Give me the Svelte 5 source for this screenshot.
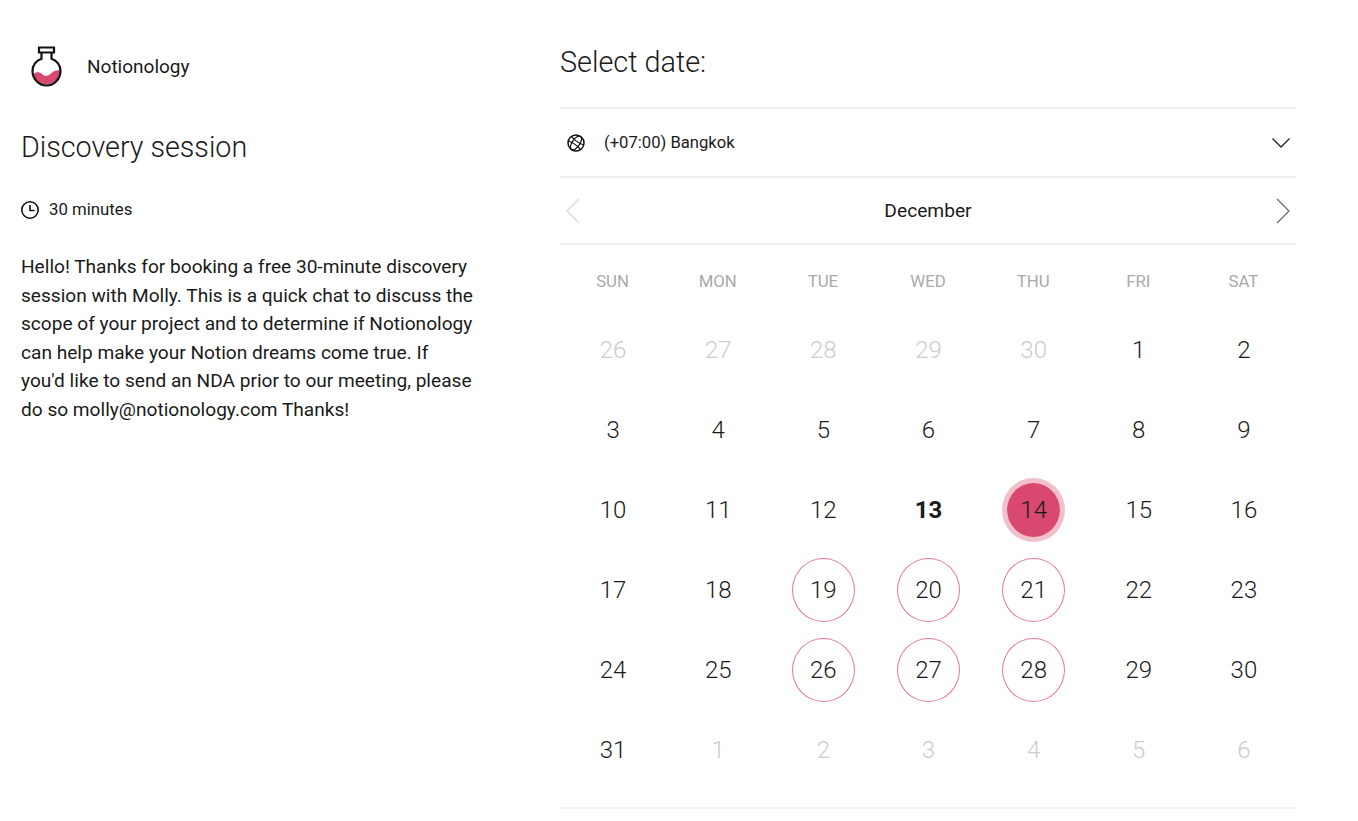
<script>
	const days = ['SUN', 'MON', 'TUE', 'WED', 'THU', 'FRI', 'SAT'];

	// muted: other month, ring: available slot
	const cells = [
		...[26, 27, 28, 29, 30].map((n) => ({ n, kind: 'muted' })),
		...Array.from({ length: 31 }, (_, i) => {
			const n = i + 1;
			let kind = '';
			if (n === 13) kind = 'today';
			if (n === 14) kind = 'selected';
			if ([19, 20, 21, 26, 27, 28].includes(n)) kind = 'ring';
			return { n, kind };
		}),
		...[1, 2, 3, 4, 5, 6].map((n) => ({ n, kind: 'muted' }))
	];
</script>

<div class="page">
	<section class="info">
		<div class="brand">
			<svg class="flask" width="36" height="42" viewBox="0 0 36 42" fill="none">
				<path d="M4.500 29C7 26.500 10.500 26.500 13 29C15.500 31.500 19 31.500 22 28.500C25 25.500 28 25 31 25.500C31 33 25 39.500 17.500 39.500C10 39.500 5 35 4.500 29z" fill="#d9486e" />
				<path d="M12.500 7.500v6.300C7 15.500 3.500 20.500 3.500 26c0 8 6.500 14.500 14 14.500S31.500 34 31.500 26c0-5.500-3.500-10.500-9-12.200V7.500" stroke="#111" stroke-width="2.200" />
				<path d="M10 2.500h15v5h-15z" stroke="#111" stroke-width="2.200" />
			</svg>
			<span>Notionology</span>
		</div>
		<h1>Discovery session</h1>
		<div class="duration">
			<svg width="20" height="20" viewBox="0 0 20 20" fill="none" stroke="#111" stroke-width="1.600">
				<circle cx="10" cy="10" r="8.200" />
				<path d="M10 5.500V10.500H14" stroke-linecap="round" />
			</svg>
			<span>30 minutes</span>
		</div>
		<p>Hello! Thanks for booking a free 30-minute discovery session with Molly. This is a quick chat to discuss the scope of your project and to determine if Notionology can help make your Notion dreams come true. If you'd like to send an NDA prior to our meeting, please do so molly@notionology.com Thanks!</p>
	</section>

	<section class="picker">
		<h2>Select date:</h2>
		<div class="timezone">
			<svg class="globe" width="20" height="20" viewBox="0 0 20 20" fill="none" stroke="#111" stroke-width="1.500">
				<circle cx="10" cy="10" r="8" />
				<g transform="rotate(35 10 10)" stroke-width="1.200">
					<ellipse cx="10" cy="10" rx="3.800" ry="8" />
					<path d="M2.500 7.200c4 1.500 11 1.500 15 0M2.500 12.800c4-1.500 11-1.500 15 0" />
				</g>
			</svg>
			<span>(+07:00) Bangkok</span>
			<svg class="chevron" width="20" height="12" viewBox="0 0 20 12" fill="none" stroke="#222" stroke-width="1.300">
				<path d="M1.500 1.500L10 10L18.500 1.500" />
			</svg>
		</div>
		<div class="month">
			<svg width="16" height="26" viewBox="0 0 16 26" fill="none" stroke="#d8d8d8" stroke-width="1.200">
				<path d="M14 1L2 13L14 25" />
			</svg>
			<span>December</span>
			<svg width="16" height="26" viewBox="0 0 16 26" fill="none" stroke="#666" stroke-width="1.200">
				<path d="M2 1L14 13L2 25" />
			</svg>
		</div>
		<div class="weekdays">
			{#each days as d}
				<div>{d}</div>
			{/each}
		</div>
		<div class="grid">
			{#each cells as c}
				<div class="cell">
					<span class="day {c.kind}">{c.n}</span>
				</div>
			{/each}
		</div>
	</section>
</div>

<style>
	:global(body) {
		background: #fff;
		color: #1a1a1a;
		font-family: Roboto, sans-serif;
	}

	.page {
		display: flex;
		height: 821px;
		overflow: hidden;
		box-sizing: border-box;
		padding-left: 21px;
	}

	.info {
		width: 460px;
		margin-right: 79px;
	}

	.brand {
		display: flex;
		align-items: center;
		gap: 22px;
		padding: 45px 0 0 8px;
		font-size: 19px;
		height: 42px;
	}

	h1 {
		margin: 40px 0 0;
		font-size: 28.700px;
		font-weight: 300;
		line-height: 40px;
	}

	.duration {
		display: flex;
		align-items: center;
		gap: 9px;
		margin-top: 33px;
		font-size: 16.800px;
		line-height: 20px;
	}

	.duration svg {
		margin-left: -1px;
	}

	.duration span {
		margin-top: -2px;
	}

	.info p {
		width: 454px;
		margin: 33px 0 0;
		font-size: 19.100px;
		line-height: 28.600px;
	}

	.picker {
		width: 736px;
	}

	h2 {
		margin: 0;
		height: 107px;
		box-sizing: border-box;
		padding-top: 43px;
		font-size: 28.800px;
		font-weight: 300;
		line-height: 38px;
	}

	.timezone {
		display: flex;
		align-items: center;
		height: 71px;
		box-sizing: border-box;
		border-top: 2px solid #f0f0f0;
		border-bottom: 2px solid #f0f0f0;
		padding: 0 5px 0 6px;
		font-size: 16.640px;
	}

	.globe {
		margin-right: 18px;
	}

	.chevron {
		margin-left: auto;
	}

	.month {
		display: flex;
		align-items: center;
		justify-content: space-between;
		height: 67px;
		box-sizing: border-box;
		border-bottom: 2px solid #f0f0f0;
		padding: 0 5px;
		font-size: 19.200px;
	}

	.weekdays,
	.grid {
		display: grid;
		grid-template-columns: repeat(7, 1fr);
		text-align: center;
	}

	.weekdays {
		height: 65px;
		align-items: center;
		padding-top: 7px;
		box-sizing: border-box;
		color: #aaa;
		font-size: 16.800px;
	}

	.grid {
		grid-auto-rows: 80px;
		border-bottom: 2px solid #f0f0f0;
		padding-bottom: 17px;
	}

	.cell {
		display: flex;
		align-items: center;
		justify-content: center;
	}

	.day {
		display: flex;
		align-items: center;
		justify-content: center;
		width: 63px;
		height: 64px;
		box-sizing: border-box;
		border-radius: 50%;
		margin-left: 1px;
		font-size: 24px;
		font-weight: 300;
	}

	.muted {
		color: #ccc;
	}

	.today {
		font-weight: 700;
	}

	.ring {
		border: 1px solid #e8799a;
	}

	.selected {
		background: #d9486e;
		background-clip: padding-box;
		border: 5px solid rgba(217, 72, 110, 0.35);
	}
</style>
